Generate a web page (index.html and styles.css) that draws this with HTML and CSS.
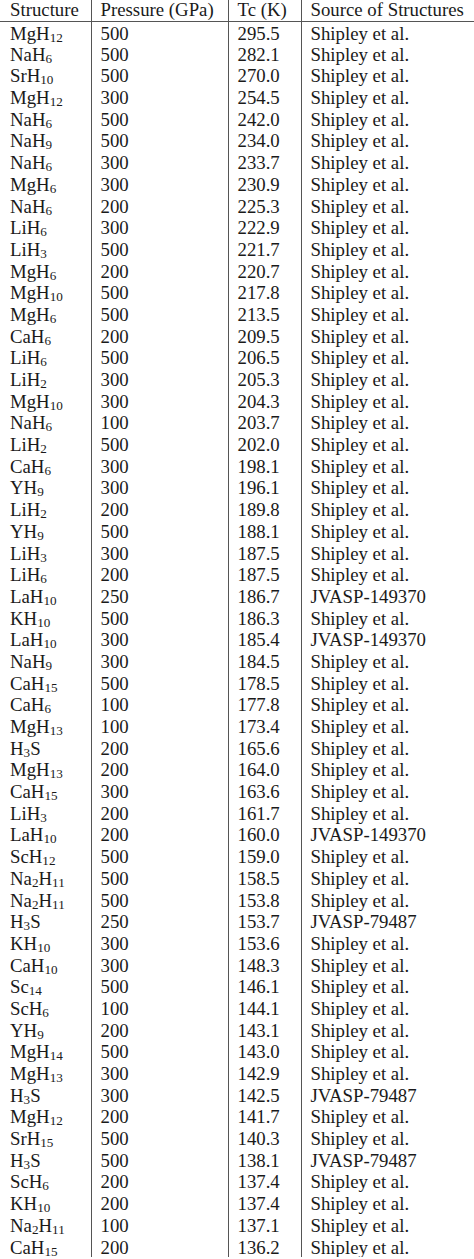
FILE: index.html
```html
<!DOCTYPE html>
<html>
<head>
<meta charset="utf-8">
<link rel="stylesheet" href="styles.css">
</head>
<body>
<table class="tbl">
<colgroup><col class="c1"><col class="c2"><col class="c3"><col class="c4"></colgroup>
<thead>
<tr><th>Structure</th><th>Pressure (GPa)</th><th>Tc (K)</th><th>Source of Structures</th></tr>
</thead>
<tbody>
<tr><td>MgH<sub>12</sub></td><td>500</td><td>295.5</td><td>Shipley et al.</td></tr>
<tr><td>NaH<sub>6</sub></td><td>500</td><td>282.1</td><td>Shipley et al.</td></tr>
<tr><td>SrH<sub>10</sub></td><td>500</td><td>270.0</td><td>Shipley et al.</td></tr>
<tr><td>MgH<sub>12</sub></td><td>300</td><td>254.5</td><td>Shipley et al.</td></tr>
<tr><td>NaH<sub>6</sub></td><td>500</td><td>242.0</td><td>Shipley et al.</td></tr>
<tr><td>NaH<sub>9</sub></td><td>500</td><td>234.0</td><td>Shipley et al.</td></tr>
<tr><td>NaH<sub>6</sub></td><td>300</td><td>233.7</td><td>Shipley et al.</td></tr>
<tr><td>MgH<sub>6</sub></td><td>300</td><td>230.9</td><td>Shipley et al.</td></tr>
<tr><td>NaH<sub>6</sub></td><td>200</td><td>225.3</td><td>Shipley et al.</td></tr>
<tr><td>LiH<sub>6</sub></td><td>300</td><td>222.9</td><td>Shipley et al.</td></tr>
<tr><td>LiH<sub>3</sub></td><td>500</td><td>221.7</td><td>Shipley et al.</td></tr>
<tr><td>MgH<sub>6</sub></td><td>200</td><td>220.7</td><td>Shipley et al.</td></tr>
<tr><td>MgH<sub>10</sub></td><td>500</td><td>217.8</td><td>Shipley et al.</td></tr>
<tr><td>MgH<sub>6</sub></td><td>500</td><td>213.5</td><td>Shipley et al.</td></tr>
<tr><td>CaH<sub>6</sub></td><td>200</td><td>209.5</td><td>Shipley et al.</td></tr>
<tr><td>LiH<sub>6</sub></td><td>500</td><td>206.5</td><td>Shipley et al.</td></tr>
<tr><td>LiH<sub>2</sub></td><td>300</td><td>205.3</td><td>Shipley et al.</td></tr>
<tr><td>MgH<sub>10</sub></td><td>300</td><td>204.3</td><td>Shipley et al.</td></tr>
<tr><td>NaH<sub>6</sub></td><td>100</td><td>203.7</td><td>Shipley et al.</td></tr>
<tr><td>LiH<sub>2</sub></td><td>500</td><td>202.0</td><td>Shipley et al.</td></tr>
<tr><td>CaH<sub>6</sub></td><td>300</td><td>198.1</td><td>Shipley et al.</td></tr>
<tr><td>YH<sub>9</sub></td><td>300</td><td>196.1</td><td>Shipley et al.</td></tr>
<tr><td>LiH<sub>2</sub></td><td>200</td><td>189.8</td><td>Shipley et al.</td></tr>
<tr><td>YH<sub>9</sub></td><td>500</td><td>188.1</td><td>Shipley et al.</td></tr>
<tr><td>LiH<sub>3</sub></td><td>300</td><td>187.5</td><td>Shipley et al.</td></tr>
<tr><td>LiH<sub>6</sub></td><td>200</td><td>187.5</td><td>Shipley et al.</td></tr>
<tr><td>LaH<sub>10</sub></td><td>250</td><td>186.7</td><td>JVASP-149370</td></tr>
<tr><td>KH<sub>10</sub></td><td>500</td><td>186.3</td><td>Shipley et al.</td></tr>
<tr><td>LaH<sub>10</sub></td><td>300</td><td>185.4</td><td>JVASP-149370</td></tr>
<tr><td>NaH<sub>9</sub></td><td>300</td><td>184.5</td><td>Shipley et al.</td></tr>
<tr><td>CaH<sub>15</sub></td><td>500</td><td>178.5</td><td>Shipley et al.</td></tr>
<tr><td>CaH<sub>6</sub></td><td>100</td><td>177.8</td><td>Shipley et al.</td></tr>
<tr><td>MgH<sub>13</sub></td><td>100</td><td>173.4</td><td>Shipley et al.</td></tr>
<tr><td>H<sub>3</sub>S</td><td>200</td><td>165.6</td><td>Shipley et al.</td></tr>
<tr><td>MgH<sub>13</sub></td><td>200</td><td>164.0</td><td>Shipley et al.</td></tr>
<tr><td>CaH<sub>15</sub></td><td>300</td><td>163.6</td><td>Shipley et al.</td></tr>
<tr><td>LiH<sub>3</sub></td><td>200</td><td>161.7</td><td>Shipley et al.</td></tr>
<tr><td>LaH<sub>10</sub></td><td>200</td><td>160.0</td><td>JVASP-149370</td></tr>
<tr><td>ScH<sub>12</sub></td><td>500</td><td>159.0</td><td>Shipley et al.</td></tr>
<tr><td>Na<sub>2</sub>H<sub>11</sub></td><td>500</td><td>158.5</td><td>Shipley et al.</td></tr>
<tr><td>Na<sub>2</sub>H<sub>11</sub></td><td>500</td><td>153.8</td><td>Shipley et al.</td></tr>
<tr><td>H<sub>3</sub>S</td><td>250</td><td>153.7</td><td>JVASP-79487</td></tr>
<tr><td>KH<sub>10</sub></td><td>300</td><td>153.6</td><td>Shipley et al.</td></tr>
<tr><td>CaH<sub>10</sub></td><td>300</td><td>148.3</td><td>Shipley et al.</td></tr>
<tr><td>Sc<sub>14</sub></td><td>500</td><td>146.1</td><td>Shipley et al.</td></tr>
<tr><td>ScH<sub>6</sub></td><td>100</td><td>144.1</td><td>Shipley et al.</td></tr>
<tr><td>YH<sub>9</sub></td><td>200</td><td>143.1</td><td>Shipley et al.</td></tr>
<tr><td>MgH<sub>14</sub></td><td>500</td><td>143.0</td><td>Shipley et al.</td></tr>
<tr><td>MgH<sub>13</sub></td><td>300</td><td>142.9</td><td>Shipley et al.</td></tr>
<tr><td>H<sub>3</sub>S</td><td>300</td><td>142.5</td><td>JVASP-79487</td></tr>
<tr><td>MgH<sub>12</sub></td><td>200</td><td>141.7</td><td>Shipley et al.</td></tr>
<tr><td>SrH<sub>15</sub></td><td>500</td><td>140.3</td><td>Shipley et al.</td></tr>
<tr><td>H<sub>3</sub>S</td><td>500</td><td>138.1</td><td>JVASP-79487</td></tr>
<tr><td>ScH<sub>6</sub></td><td>200</td><td>137.4</td><td>Shipley et al.</td></tr>
<tr><td>KH<sub>10</sub></td><td>200</td><td>137.4</td><td>Shipley et al.</td></tr>
<tr><td>Na<sub>2</sub>H<sub>11</sub></td><td>100</td><td>137.1</td><td>Shipley et al.</td></tr>
<tr><td>CaH<sub>15</sub></td><td>200</td><td>136.2</td><td>Shipley et al.</td></tr>
</tbody>
</table>
</body>
</html>
```
FILE: styles.css
```css
html, body {
  margin: 0;
  padding: 0;
  background: #ffffff;
}
body {
  font-family: "Liberation Serif", "Times New Roman", serif;
  font-size: 18.8px;
  color: #1a1a1a;
}
.tbl {
  border-collapse: collapse;
  table-layout: fixed;
  width: 474px;
}
.c1 { width: 91px; }
.c2 { width: 137px; }
.c3 { width: 73px; }
.c4 { width: 173px; }
.tbl th,
.tbl td {
  font-weight: normal;
  text-align: left;
  white-space: nowrap;
  padding: 0 0 0 9px;
  border-left: 1px solid #555;
  overflow: visible;
}
.tbl th:first-child,
.tbl td:first-child {
  border-left: none;
  padding-left: 10px;
}
.tbl thead tr {
  height: 21px;
}
.tbl thead th {
  border-bottom: 1px solid #555;
  line-height: 18px;
  padding-bottom: 1px;
  vertical-align: middle;
}
.tbl tbody tr {
  height: 21.7px;
}
.tbl tbody td {
  line-height: 16px;
  padding-top: 4px;
  vertical-align: top;
}
sub {
  font-size: 0.7em;
  vertical-align: -0.18em;
  line-height: 0;
}
```
